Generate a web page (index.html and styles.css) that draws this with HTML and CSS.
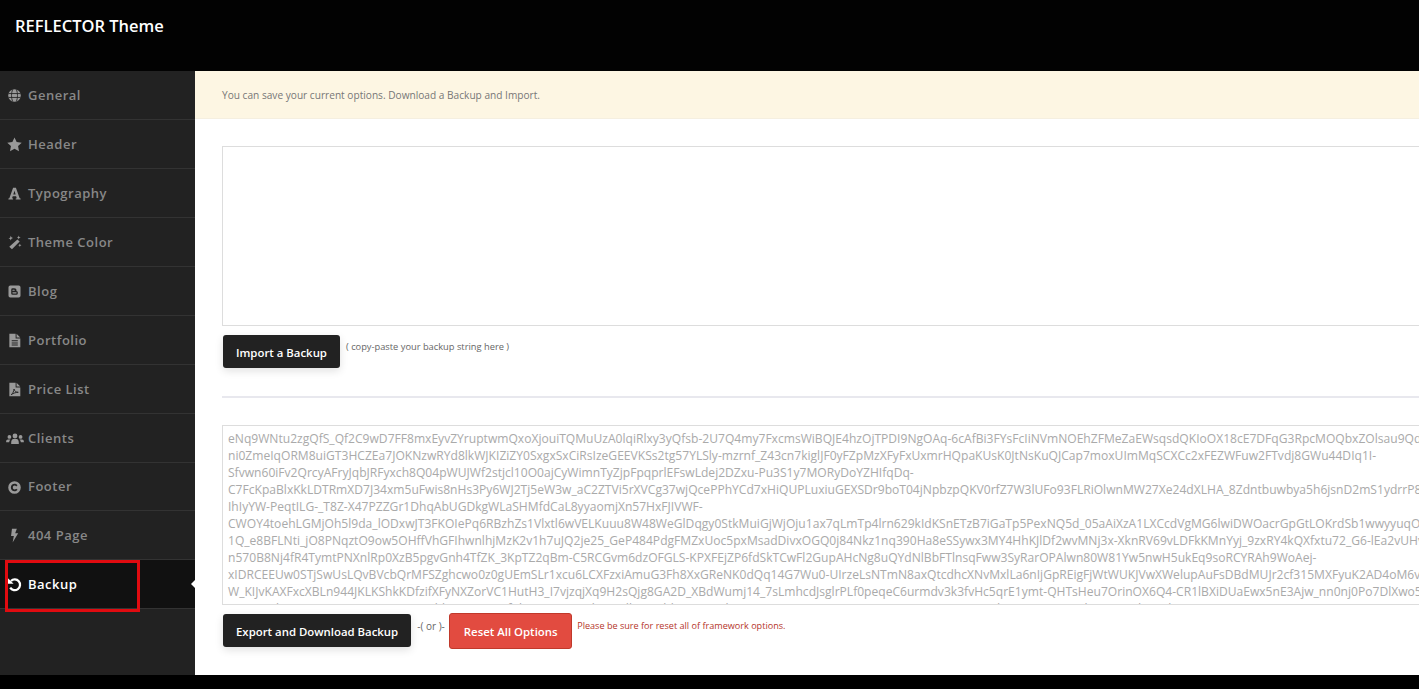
FILE: index.html
```html
<!DOCTYPE html>
<html lang="en">
<head>
<meta charset="utf-8">
<title>REFLECTOR Theme</title>
<link rel="stylesheet" href="styles.css">
</head>
<body>
<header class="topbar"><h1 class="brand">REFLECTOR Theme</h1></header>
<div class="layout">
  <nav class="sidebar">
    <ul class="menu">
      <li class="item"><svg class="ico" viewBox="0 0 16 16"><circle cx="8" cy="8" r="6.7" fill="currentColor"/><path d="M1.500 5.900h13M1.500 10.100h13M6 1.500c-1.600 4-1.600 9 0 13M10 1.500c1.600 4 1.600 9 0 13" fill="none" stroke="#222" stroke-width=".9"/></svg><span>General</span></li>
      <li class="item"><svg class="ico" viewBox="0 0 16 16"><path fill="currentColor" d="M8 .4l2.300 4.900 5.400.7-3.900 3.700 1 5.400L8 12.500l-4.800 2.600 1-5.400L.3 6l5.400-.7z"/></svg><span>Header</span></li>
      <li class="item"><svg class="ico" viewBox="0 0 16 16"><path fill="currentColor" fill-rule="evenodd" d="M1.500 14.500v-1.300l1-.2L6.500 1.800h3L13.500 13l1 .2v1.300H9.300v-1.300l1.100-.2-.7-2.100H6.100l-.7 2.100 1.100.2v1.300zM6.700 9.100h2.500L8 5.100z"/></svg><span>Typography</span></li>
      <li class="item"><svg class="ico" viewBox="0 0 16 16"><path fill="currentColor" d="M11.100 4.800l2.400 2.200-8.200 8.300-2.900-2.700zM4 .8l.7 1.700 1.700.7-1.700.7L4 5.900l-.7-1.700-1.700-.7 1.700-.7zM12.500.6l.6 1.500 1.500.6-1.500.6-.6 1.500-.6-1.500-1.500-.6 1.500-.6zM13.700 9.300l.5 1.200 1.200.5-1.200.5-.5 1.200-.5-1.200-1.200-.5 1.200-.5z"/></svg><span>Theme Color</span></li>
      <li class="item"><svg class="ico" viewBox="0 0 16 16"><path fill="currentColor" fill-rule="evenodd" d="M3.500 1.600h9a1.900 1.900 0 0 1 1.900 1.900v9a1.900 1.900 0 0 1-1.900 1.900h-9a1.900 1.900 0 0 1-1.900-1.900v-9a1.900 1.900 0 0 1 1.900-1.900zM6 4.500A1.500 1.500 0 0 0 4.500 6v4A1.500 1.500 0 0 0 6 11.500h4a1.500 1.500 0 0 0 1.500-1.500V8.500c0-.6-.4-.9-1-.9-.3 0-.4-.2-.4-.5a2.500 2.500 0 0 0-2.500-2.600zM6.300 6h1.400a.6.6 0 0 1 0 1.200H6.300a.6.6 0 0 1 0-1.200zM6.300 8.800h3.400a.6.6 0 0 1 0 1.200H6.300a.6.6 0 0 1 0-1.200z"/></svg><span>Blog</span></li>
      <li class="item"><svg class="ico" viewBox="0 0 16 16"><path fill="currentColor" fill-rule="evenodd" d="M2.500.8h6.700v5h5V15.200H2.500zM10.200.8l4 4h-4zM5 7.800v1.100h6.500V7.800zM5 10v1.100h6.500V10zM5 12.200v1.100h6.500v-1.100z"/></svg><span>Portfolio</span></li>
      <li class="item"><svg class="ico" viewBox="0 0 16 16"><path fill="currentColor" fill-rule="evenodd" d="M2.500.8h6.700v5h5V15.200H2.500zM10.200.8l4 4h-4z"/><path d="M4.500 13.500c1.500-1 2.800-3.500 3-6 .3 2 2 3.400 4.500 3.500-2.500 0-5 .8-7.500 2.500z" fill="none" stroke="#222" stroke-width="1"/></svg><span>Price List</span></li>
      <li class="item"><svg class="ico ico-wide" viewBox="0 0 20 16"><path fill="currentColor" d="M10 2.500a2.700 2.700 0 1 1 0 5.400 2.700 2.700 0 0 1 0-5.400zM5.800 14c-.3-3.400.8-5.500 2.400-5.500h3.600c1.600 0 2.700 2.100 2.400 5.500zM3.800 4.200a2.100 2.100 0 1 1 0 4.200 2.100 2.100 0 0 1 0-4.200zM16.200 4.200a2.100 2.100 0 1 1 0 4.200 2.100 2.100 0 0 1 0-4.200zM.2 12.300c-.3-2 .6-3.300 2-3.300h2.700c-.7.900-1.300 2-1.400 3.300zM19.800 12.300c.3-2-.6-3.300-2-3.300h-2.700c.7.900 1.300 2 1.400 3.300z"/></svg><span>Clients</span></li>
      <li class="item"><svg class="ico" viewBox="0 0 16 16"><path fill="currentColor" fill-rule="evenodd" d="M8 1.300a6.700 6.700 0 1 1 0 13.400A6.700 6.700 0 0 1 8 1.300zM11.200 5.600C10.500 4.600 9.400 4 8.100 4 5.800 4 4.100 5.700 4.100 8s1.700 4 4 4c1.300 0 2.400-.6 3.100-1.600L9.800 9.200c-.4.500-.9.900-1.700.9C7 10.100 6.200 9.200 6.200 8s.8-2.100 1.900-2.100c.8 0 1.300.4 1.700.9z"/></svg><span>Footer</span></li>
      <li class="item"><svg class="ico" viewBox="0 0 16 16"><path fill="currentColor" d="M5.300.8h5.200L8.700 5.500h3.200L6 15.400l1.300-6.900H4.300z"/></svg><span>404 Page</span></li>
      <li class="item item-active"><svg class="ico" viewBox="0 0 16 16"><path fill="none" stroke="currentColor" stroke-width="2.400" d="M4.200 4.300A5.700 5.700 0 1 1 3.400 11.400"/><path fill="currentColor" d="M1 1.200v6h6z"/></svg><span>Backup</span><i class="caret"></i></li>
    </ul>
    <div class="highlight"></div>
  </nav>
  <main class="content">
    <div class="notice">You can save your current options. Download a Backup and Import.</div>
    <section class="panel">
      <textarea class="box" aria-label="Import backup"></textarea>
      <div class="row-import">
        <button class="btn">Import a Backup</button>
        <span class="hint">( copy-paste your backup string here )</span>
      </div>
      <hr class="rule">
      <textarea class="box box-data" readonly aria-label="Export backup">eNq9WNtu2zgQfS_Qf2C9wD7FF8mxEyvZYruptwmQxoXjouiTQMuUzA0lqiRlxy3yQfsb-2U7Q4my7FxcmsWiBQJE4hzOjTPDI9NgOAq-6cAfBi3FYsFcIiNVmNOEhZFMeZaEWsqsdQKIoOX18cE7DFqG3RpcMOQbxZOlsau9QdW
ni0ZmeIqORM8uiGT3HCZEa7JOKNzwRYd8lkWJKIZiZY0SxgxSxCiRsIzeGEEVKSs2tg57YLSly-mzrnf_Z43cn7kiglJF0yFZpMzXFyFxUxmrHQpaKUsK0JtNsKuQJCap7moxUImMqSCXCc2xFEZWFuw2FTvdj8GWu44DIq1I-
Sfvwn60iFv2QrcyAFryJqbJRFyxch8Q04pWUJWf2stjcl10O0ajCyWimnTyZjpFpqprlEFswLdej2DZxu-Pu3S1y7MORyDoYZHIfqDq-
C7FcKpaBlxKkLDTRmXD7J34xm5uFwis8nHs3Py6WJ2Tj5eW3w_aC2ZTVi5rXVCg37wjQcePPhYCd7xHiQUPLuxiuGEXSDr9boT04jNpbzpQKV0rfZ7W3lUFo93FLRiOlwnMW27Xe24dXLHA_8Zdntbuwbya5h6jsnD2mS1ydrrP8PdK
IhIyYW-PeqtILG-_T8Z-X47PZZGr1DhqAbUGDkgWLaSHMfdCaL8yyaomjXn57HxFJIVWF-
CWOY4toehLGMjOh5l9da_lODxwJT3FKOIePq6RBzhZs1Vlxtl6wVELKuuu8W48WeGlDqgy0StkMuiGjWjOju1ax7qLmTp4lrn629kIdKSnETzB7iGaTp5PexNQ5d_05aAiXzA1LXCcdVgMG6lwiDWOacrGpGtLOKrdSb1wwyyuqOMaY
1Q_e8BFLNti_jO8PNqztO9ow5OHffVhGFIhwnlhjMzK2v1h7uJQ2je25_GeP484PdgFMZxUoc5pxMsadDivxOGQ0j84Nkz1nq390Ha8eSSywx3MY4HhKJlDf2wvMNj3x-XknRV69vLDFkKMnYyj_9zxRY4kQXfxtu72_G6-lEa2vUHvKs
n570B8Nj4fR4TymtPNXnlRp0XzB5pgvGnh4TfZK_3KpTZ2qBm-C5RCGvm6dzOFGLS-KPXFEjZP6fdSkTCwFl2GupAHcNg8uQYdNlBbFTlnsqFww3SyRarOPAlwn80W81Yw5nwH5ukEq9soRCYRAh9WoAej-
xIDRCEEUw0STjSwUsLQvBVcbQrMFSZghcwo0z0gUEmSLr1xcu6LCXFzxiAmuG3Fh8XxGReNK0dQq14G7Wu0-UIrzeLsNTmN8axQtcdhcXNvMxlLa6nIjGpREigFjWtWUKJVwXWelupAuFsDBdMUJr2cf315MXFyuK2AD4oM6v-
W_KIJvKAXFxcXBLn944JKLKShkKDfzifXFyNXZorVC1HutH3_I7vjzqjXq9H2sQjg8GA2D_XBdWumj14_7sLmhcdJsglrPLf0peqeC6urmdv3k3fvHc5qrE1ymt-QHTsHeu7OrinOX6Q4-CR1lBXiDUaEwx5nE3Ajw_nn0nj0Po7DlXwo56x
tzIv6xDThJqUYSCTE8D0CNvBwtz4MPhbyHFOCDtYfKhiiVKtTWxPNlpGiKdbGJqAbbL0DIiOJFhWYrAEFwUu3mSMiBXv7cPGHu2vJKBLoWw9V1dPaPQtUeYyCiiKbMN0pAdR9cXh1x5mUuwcTjaF</textarea>
      <div class="row-export">
        <button class="btn">Export and Download Backup</button>
        <span class="or">-( or )-</span>
        <button class="btn btn-danger">Reset All Options</button>
        <span class="warn">Please be sure for reset all of framework options.</span>
      </div>
    </section>
  </main>
</div>
</body>
</html>
```
FILE: styles.css
```css
* { box-sizing: border-box; }
html, body { height: 100%; }
body {
  margin: 0;
  overflow: hidden;
  background: #000;
  font-family: "Open Sans", "Liberation Sans", sans-serif;
}
.topbar { height: 71px; padding: 14px 15px 0; background: #020202; }
.brand { margin: 0; color: #fff; font-size: 16.5px; line-height: 24px; font-weight: 600; }
.layout { display: flex; height: 604px; }
.sidebar { position: relative; flex: 0 0 195px; background: #222; }
.menu { margin: 0; padding: 0; list-style: none; }
.item {
  position: relative;
  display: flex;
  align-items: center;
  height: 48.95px;
  padding-left: 28px;
  border-bottom: 1px solid #333;
  color: #888;
  font-size: 13px;
  font-weight: 600;
  letter-spacing: .5px;
}
.ico { position: absolute; left: 7px; top: 17px; width: 15px; height: 15px; color: #999; }
.ico-wide { left: 6px; width: 18px; }
.item-active { background: #111; color: #fff; }
.item-active .ico { color: #fff; }
.caret {
  position: absolute;
  right: 0;
  top: 20px;
  border: 4px solid transparent;
  border-left-width: 0;
  border-right-color: #fff;
}
.highlight {
  position: absolute;
  left: 5px;
  top: 489px;
  width: 135px;
  height: 52px;
  border: 3px solid #e00b10;
}
.content { flex: 1; min-width: 0; overflow: hidden; background: #fff; }
.notice {
  height: 48px;
  padding-left: 27px;
  border-bottom: 1px solid #f5efe0;
  background: #fdf6e3;
  color: #777;
  font-size: 10.15px;
  line-height: 49px;
}
.panel { padding: 27px 0 0 27px; }
.box {
  display: block;
  width: 1400px;
  height: 180px;
  padding: 4px 5px;
  border: 1px solid #ddd;
  outline: 0;
  resize: none;
  overflow: hidden;
  background: #fff;
  color: #aaa;
  font-family: "Open Sans", "Liberation Sans", sans-serif;
  font-size: 12.08px;
  line-height: 17px;
  white-space: pre;
}
.row-import { display: flex; align-items: flex-start; margin: 9px 0 0 1px; }
.btn {
  height: 33px;
  padding: 1px 13px 0;
  border: 0;
  border-radius: 3px;
  background: #222;
  color: #fff;
  font-family: inherit;
  font-size: 11.4px;
  font-weight: 600;
  box-shadow: 0 3px 8px rgba(0, 0, 0, .12);
}
.hint { margin: 5px 0 0 6px; color: #666; font-size: 9.3px; line-height: 14px; }
.rule { height: 2px; margin: 28px 0 27px; border: 0; background: #e8e8ee; }
.row-export { display: flex; align-items: flex-start; margin: 9px 0 0 1px; }
.or { width: 32px; margin: 5px 0 0 6px; color: #666; font-size: 10px; line-height: 14px; }
.btn-danger {
  width: 123px;
  height: 36px;
  margin-top: -1px;
  padding: 1px 0 0;
  border: 1px solid #c0392b;
  background: #e24b40;
  box-shadow: none;
}
.warn { margin: 5px 0 0 5px; color: #b5352a; font-size: 9.1px; line-height: 14px; }
```
